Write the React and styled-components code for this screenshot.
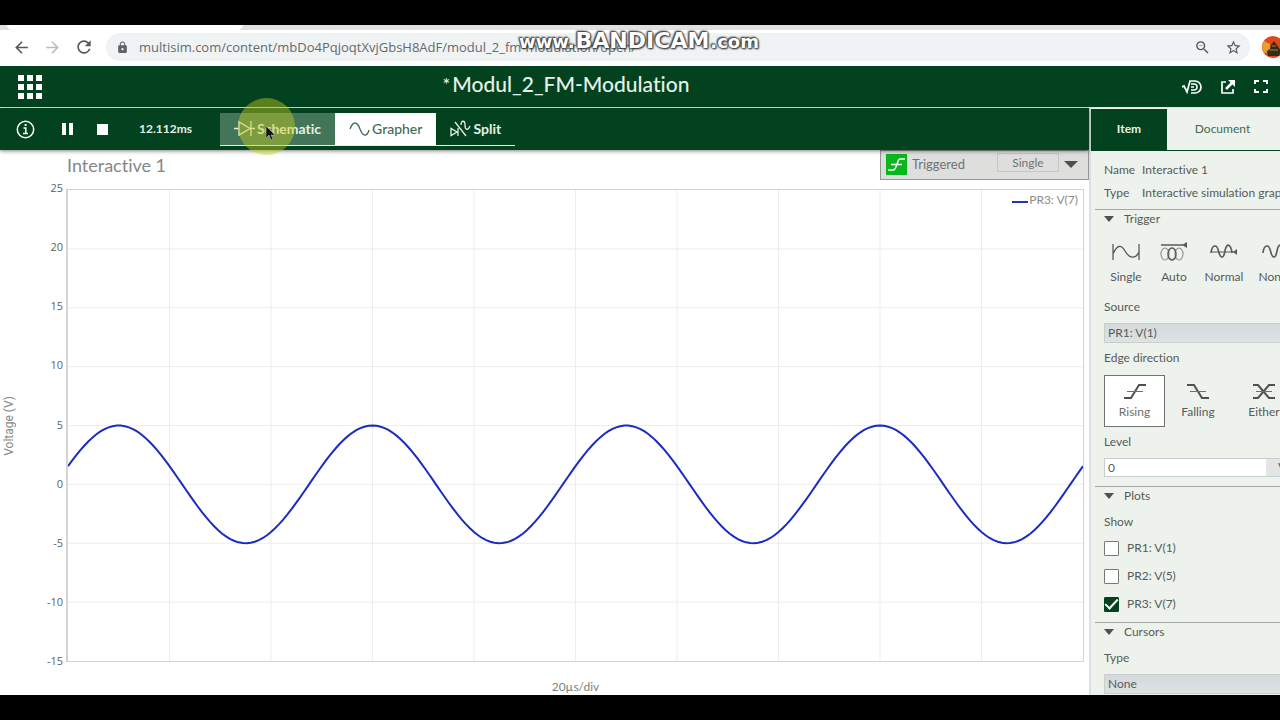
import React from 'react';
import styled, { createGlobalStyle, css } from 'styled-components';
import { MdArrowBack, MdArrowForward, MdRefresh, MdLock, MdZoomOut, MdStarBorder } from 'react-icons/md';

const green = '#03421f';
const panel = '#edf2ed';
const text = '#565b58';

const GlobalStyle = createGlobalStyle`
  * {
    box-sizing: border-box;
  }
  body {
    margin: 0;
    background: #000;
    font-family: Lato, 'Liberation Sans', sans-serif;
    font-size: 12px;
    line-height: 16px;
    font-variant-ligatures: none;
    color: ${text};
  }
  button, input, select {
    font: inherit;
    color: inherit;
    margin: 0;
  }
  button {
    padding: 0;
    border: 0;
    background: none;
  }
  svg {
    display: block;
    flex: none;
  }
`;

const Screen = styled.div`
  position: relative;
  display: flex;
  flex-direction: column;
  height: 100vh;
  padding: 25px 0;
  overflow: hidden;
`;

const TabStrip = styled.div`
  height: 5px;
  flex: none;
  background: #dee1e4;
`;

const ActiveTab = styled.div`
  height: 5px;
  width: 236px;
  margin-left: 7px;
  border-radius: 0 0 5px 5px;
  background: #fff;
`;

const BrowserBar = styled.div`
  display: flex;
  flex: none;
  align-items: center;
  height: 36px;
  padding: 0 0 2px 12px;
  gap: 12px;
  background: #fff;
  overflow: hidden;
`;

const NavButton = styled.button`
  color: ${({ $dim }) => ($dim ? '#b9bbbd' : '#55585c')};
`;

const Omnibox = styled.div`
  display: flex;
  flex: 1;
  min-width: 0;
  align-items: center;
  gap: 10px;
  height: 28px;
  padding: 0 8px 0 10px;
  border-radius: 14px;
  background: #f0f3f3;
  color: #5f6368;
`;

const OmniActions = styled.div`
  display: flex;
  gap: 14px;
`;

const Url = styled.input`
  flex: 1;
  min-width: 0;
  padding: 0;
  border: 0;
  background: none;
  font-family: 'Open Sans', 'Noto Sans', sans-serif;
  font-size: 13px;
  color: #66696c;
`;

const Avatar = styled.div`
  flex: none;
  width: 18px;
  height: 22px;
  overflow: hidden;
`;

const Header = styled.header`
  display: grid;
  grid-template-columns: 60px 1fr 208px;
  align-items: center;
  flex: none;
  height: 42px;
  border-bottom: 1px solid #dfe8e1;
  background: ${green};
  color: #fff;
`;

const AppsButton = styled.button`
  justify-self: center;
  color: #fff;
`;

const Title = styled.h1`
  display: flex;
  justify-content: center;
  gap: 2px;
  margin: 0 0 6px;
  font-size: 21px;
  line-height: 28px;
  font-weight: 500;
  color: #e6f2e8;
  small {
    font-size: 18px;
  }
`;

const HeaderActions = styled.div`
  display: flex;
  justify-content: flex-end;
  align-items: center;
  gap: 19px;
  padding-right: 12px;
  button {
    color: #fff;
  }
`;

const Body = styled.div`
  display: flex;
  flex: 1;
  min-height: 0;
  background: #fff;
`;

const Main = styled.main`
  display: flex;
  flex: 1;
  min-width: 0;
  flex-direction: column;
`;

const Toolbar = styled.div`
  position: relative;
  display: flex;
  flex: none;
  align-items: center;
  height: 42px;
  padding: 0 16px;
  background: ${green};
  box-shadow: 0 1px 4px rgba(0, 0, 0, 0.5);
  color: #fff;
`;

const ToolButton = styled.button`
  flex: none;
  width: ${({ $wide }) => ($wide ? 46 : 35)}px;
  color: #fff;
`;

const SimTime = styled.span`
  flex: none;
  width: 88px;
  padding-left: 7px;
  font-weight: 700;
  color: #e6f0e6;
`;

const ViewTabs = styled.div`
  display: flex;
  border-bottom: 1px solid #e6efe8;
`;

const ViewTab = styled.button`
  display: flex;
  align-items: center;
  gap: 2px;
  height: 32px;
  padding: 0 14px;
  font-size: 14px;
  font-weight: 700;
  color: #e6f0e6;
  ${({ $hovered }) => $hovered && css`
    background: #42755a;
  `}
  ${({ $active }) => $active && css`
    background: #fff;
    font-weight: 500;
    color: #3f6b53;
  `}
`;

const GraphHead = styled.div`
  display: flex;
  flex: none;
  justify-content: space-between;
  align-items: center;
  height: 30px;
  padding: 0 0 0 67px;
`;

const GraphTitle = styled.h2`
  margin: 0;
  font-size: 18px;
  line-height: 22px;
  font-weight: 400;
  color: #858786;
`;

const TriggerBar = styled.div`
  display: flex;
  align-items: center;
  width: 209px;
  height: 30px;
  padding: 0 10px 2px 5px;
  gap: 5px;
  border: 1px solid #959795;
  background: #dededc;
  font-size: 13px;
  color: #707371;
`;

const SingleButton = styled.button`
  align-self: flex-start;
  width: 62px;
  height: 19px;
  margin: 2px 0 0 auto;
  border: 1px solid #c6c8c6;
  font-size: 12px;
`;

const Graph = styled.div`
  display: grid;
  grid-template-columns: 18px 45px 1fr;
  grid-template-rows: 1fr 33px;
  flex: 1;
  min-height: 0;
  padding: 9px 5px 0 0;
`;

const YTitle = styled.div`
  align-self: center;
  justify-self: center;
  writing-mode: vertical-rl;
  transform: rotate(180deg);
  font-family: Roboto, sans-serif;
  font-size: 12px;
  color: #858786;
`;

const YAxis = styled.div`
  display: flex;
  flex-direction: column;
  justify-content: space-between;
  margin: -9px 0 -7px;
  text-align: right;
  font-family: 'Open Sans', sans-serif;
  font-size: 11px;
  color: #606361;
`;

const XTitle = styled.div`
  grid-column: 3;
  align-self: end;
  margin-left: 4px;
  text-align: center;
  color: #7c7f7d;
`;

const Plot = styled.div`
  position: relative;
  min-height: 0;
  margin-left: 3px;
  border: 2px solid #d3d5d4;
  border-width: 1px 1px 1px 2px;
  svg {
    width: 100%;
    height: 100%;
  }
`;

const Legend = styled.div`
  position: absolute;
  top: 2px;
  right: 5px;
  display: flex;
  align-items: center;
  gap: 1px;
  color: #8a8c8b;
  &::before {
    content: '';
    width: 16px;
    height: 2px;
    margin-top: 4px;
    background: #2336ae;
  }
`;

const Sidebar = styled.aside`
  flex: 0 0 191px;
  border-left: 2px solid #dbe1e2;
  background: ${panel};
  overflow: hidden;
`;

const SideTabs = styled.div`
  display: flex;
  height: 43px;
  padding-top: 1px;
  border-bottom: 1px solid ${green};
`;

const SideTab = styled.button`
  flex: 0 0 ${({ $active }) => ($active ? 76 : 111)}px;
  padding-bottom: 2px;
  color: #3f6b53;
  ${({ $active }) => $active && css`
    background: ${green};
    font-weight: 700;
    color: #e6f2e8;
  `}
`;

const Info = styled.dl`
  display: grid;
  grid-template-columns: 38px 160px;
  row-gap: 7px;
  margin: 0;
  padding: 11px 0 8px 13px;
  white-space: nowrap;
  dd {
    margin: 0;
  }
`;

const Section = styled.section`
  margin-left: 4px;
  padding: 0 0 ${({ $pad }) => $pad}px 9px;
  border-top: 1px solid #a3a9a5;
`;

const SectionTitle = styled.h3`
  display: flex;
  align-items: center;
  gap: 10px;
  height: 18px;
  margin: 0;
  font-size: 12px;
  font-weight: 400;
`;

const Modes = styled.div`
  display: flex;
  width: 210px;
  padding: 14px 0 5px;
`;

const Mode = styled.button`
  display: flex;
  flex: 0 0 ${({ $width }) => $width}px;
  flex-direction: column;
  align-items: center;
  gap: 7px;
`;

const Field = styled.label`
  display: block;
  width: 220px;
  margin: 9px 0 0;
`;

const ShowLabel = styled.div`
  margin: 9px 0 4px;
`;

const Select = styled.select`
  display: block;
  width: 100%;
  height: 20px;
  margin: 8px 0 7px;
  padding: 0 3px;
  border: 1px solid #c9cfcf;
  border-radius: 0;
  appearance: none;
  background: linear-gradient(#d4d9dc, #dde2e3);
`;

const Edges = styled.div`
  display: flex;
  width: 225px;
  margin: 9px 0 7px;
`;

const Edge = styled.button`
  display: flex;
  flex: 0 0 ${({ $active }) => ($active ? 61 : 66)}px;
  flex-direction: column;
  align-items: center;
  justify-content: center;
  gap: 4px;
  height: 52px;
  border: 1px solid transparent;
  ${({ $active }) => $active && css`
    border-color: #6f7471;
    background: #fff;
    color: #6c706d;
  `}
`;

const LevelRow = styled.div`
  display: flex;
  width: 220px;
  height: 19px;
  margin-top: 8px;
  border: 1px solid #c9cfcf;
  background: #e3e6e4;
  span {
    padding-left: 12px;
  }
`;

const LevelInput = styled.input`
  width: 161px;
  padding: 0 3px;
  border: 0;
  background: #fff;
`;

const Check = styled.label`
  display: flex;
  align-items: center;
  gap: 8px;
  height: 28px;
`;

const Box = styled.input`
  display: grid;
  place-items: center;
  width: 15px;
  height: 15px;
  border: 1px solid #747b77;
  border-radius: 1px;
  appearance: none;
  background: #fff;
  &:checked {
    border-color: ${green};
    background: ${green};
  }
  &:checked::after {
    content: '';
    width: 11px;
    height: 5px;
    border: solid #fff;
    border-width: 0 0 2px 2px;
    transform: translateY(-2px) rotate(-47deg);
  }
`;

const Watermark = styled.div`
  position: absolute;
  top: 27px;
  left: 519px;
  display: flex;
  align-items: baseline;
  gap: 1px;
  font-family: 'DejaVu Sans', sans-serif;
  font-weight: 700;
  font-size: 18px;
  line-height: 28px;
  color: #fff;
  text-shadow: 0 0 2px #333, 0 0 2px #333, 1px 1px 2px #333, -1px -1px 2px #333;
  b {
    font-size: 22px;
  }
`;

const Pointer = styled.div`
  position: absolute;
  top: 98px;
  left: 238px;
  width: 57px;
  height: 57px;
  border-radius: 50%;
  background: rgba(196, 205, 28, 0.45);
  pointer-events: none;
  svg {
    margin: 28px 0 0 28px;
  }
`;

const Icon = ({ w, h, children, sw = 1.3 }) => (
  <svg width={w} height={h} viewBox={`0 0 ${w} ${h}`} fill='none' stroke='currentColor' strokeWidth={sw} aria-hidden='true'>
    {children}
  </svg>
);

const Caret = ({ w = 10, h = 6 }) => (
  <svg width={w} height={h} viewBox='0 0 10 6' preserveAspectRatio='none' aria-hidden='true'>
    <path d='M0 0h10L5 6z' fill='#4c524e' />
  </svg>
);

const AppsIcon = () => (
  <Icon w={24} h={24} sw={0}>
    {[0, 9, 18].map(y => [0, 9, 18].map(x => <rect key={`${x}-${y}`} x={x} y={y} width='6' height='6' fill='#fff' />))}
  </Icon>
);

const edgePaths = {
  rising: 'M0 15h7L15 2h7',
  falling: 'M0 2h7l8 13h7',
  either: 'M0 2h5l11 13h6M0 15h5L16 2h6',
};

const EdgeIcon = ({ kind }) => (
  <Icon w={22} h={17} sw={2}>
    <path d={edgePaths[kind]} stroke='#4c524e' />
    <path d='M3 8.500h16' stroke='#6c716e' strokeWidth='1' />
  </Icon>
);

// one cycle lasts 2.5 divisions, the first crest is half a division in
const wave = () => {
  const points = [];
  for (let x = 0; x <= 1000; x += 4) {
    const v = 5 * Math.cos((2 * Math.PI * (x - 50)) / 250);
    points.push(`${x},${((25 - v) / 40) * 800}`);
  }
  return points.join(' ');
};

const ticks = [25, 20, 15, 10, 5, 0, -5, -10, -15];

const BrowserChrome = () => (
  <>
    <TabStrip><ActiveTab /></TabStrip>
    <BrowserBar>
      <NavButton aria-label='Back'><MdArrowBack size={19} /></NavButton>
      <NavButton $dim aria-label='Forward'><MdArrowForward size={19} /></NavButton>
      <NavButton aria-label='Reload'><MdRefresh size={20} /></NavButton>
      <Omnibox>
        <MdLock size={13} />
        <Url aria-label='Address' defaultValue='multisim.com/content/mbDo4PqjoqtXvjGbsH8AdF/modul_2_fm-modulation/open/' />
        <OmniActions>
          <NavButton aria-label='Zoom'><MdZoomOut size={17} /></NavButton>
          <NavButton aria-label='Bookmark'><MdStarBorder size={17} /></NavButton>
        </OmniActions>
      </Omnibox>
      <Avatar>
        <svg width='22' height='22' viewBox='0 0 22 22' aria-hidden='true'>
          <circle cx='11' cy='11' r='11' fill='#e0481a' />
          <path d='M2 5a11 11 0 0 0 0 12l6-1V8z' fill='#e8a02c' />
          <path d='M9 9l3-4 3 4 2 3 2 3-2 5H6l-1-5 3-2z' fill='#3a2a18' />
          <path d='M10 10h4M8 14h8' stroke='#a8823c' />
        </svg>
      </Avatar>
    </BrowserBar>
  </>
);

const AppHeader = () => (
  <Header>
    <AppsButton aria-label='Apps'><AppsIcon /></AppsButton>
    <Title><small>*</small>Modul_2_FM-Modulation</Title>
    <HeaderActions>
      <button aria-label='Simulation settings'>
        <Icon w={20} h={14} sw={1.7}>
          <path d='M0 7l2-1 3 6L8 1h5a6 6 0 0 1 0 12H9' />
          <path d='M9 4h3a3 3 0 0 1 0 6H9M9 7h3' strokeWidth='1.500' />
        </Icon>
      </button>
      <button aria-label='Open in new window'>
        <Icon w={14} h={14} sw={1.7}>
          <path d='M5 2H1v11h11V9' />
          <path d='M5 9l6-6' strokeWidth='2.500' />
          <path d='M7 0h7v7z' fill='#fff' stroke='none' />
        </Icon>
      </button>
      <button aria-label='Full screen'>
        <Icon w={14} h={13} sw={2}>
          <path d='M1 4V1h4M9 1h4v3M13 9v3H9M5 12H1V9' />
        </Icon>
      </button>
    </HeaderActions>
  </Header>
);

const SimToolbar = () => (
  <Toolbar>
    <ToolButton $wide aria-label='Info'>
      <Icon w={19} h={19} sw={1.5}>
        <circle cx='9.5' cy='9.5' r='8.2' />
        <path d='M7.5 8h2.3v5.5M7 13.5h5' />
        <path d='M8.6 4h2v2h-2z' fill='#fff' stroke='none' />
      </Icon>
    </ToolButton>
    <ToolButton aria-label='Pause'>
      <Icon w={11} h={12} sw={0}><path d='M0 0h4v12H0zM7 0h4v12H7z' fill='#fff' /></Icon>
    </ToolButton>
    <ToolButton aria-label='Stop'>
      <Icon w={11} h={11} sw={0}><path d='M0 0h11v11H0z' fill='#fff' /></Icon>
    </ToolButton>
    <SimTime>12.112ms</SimTime>
    <ViewTabs>
      <ViewTab $hovered>
        <Icon w={21} h={17}><path d='M0 8.5h5M5 2v13l11-6.500zM17 1v15M16 8.500h5' /></Icon>
        Schematic
      </ViewTab>
      <ViewTab $active>
        <Icon w={21} h={16}><path d='M1 8C4 0 8 0 11 8s7 8 9 1' /></Icon>
        Grapher
      </ViewTab>
      <ViewTab>
        <Icon w={21} h={17}>
          <path d='M1 8.500v7l6-3.500zM8 8v8M5 2l11 14M11 5c0-5 4-5 4 0s3 6 5 1' />
        </Icon>
        Split
      </ViewTab>
    </ViewTabs>
  </Toolbar>
);

const Grapher = () => (
  <>
    <GraphHead>
      <GraphTitle>Interactive 1</GraphTitle>
      <TriggerBar>
        <svg width='21' height='21' viewBox='0 0 21 21' aria-hidden='true'>
          <path d='M0 0h21v21H0z' fill='#09b61b' />
          <path d='M2 16h5c4 0 4-11 7-11h5M5 10.500h11' fill='none' stroke='#fff' strokeWidth='1.500' />
        </svg>
        Triggered
        <SingleButton>Single</SingleButton>
        <button aria-label='Trigger options'><Caret w={14} h={7} /></button>
      </TriggerBar>
    </GraphHead>
    <Graph>
      <YTitle>Voltage (V)</YTitle>
      <YAxis>
        {ticks.map(tick => <span key={tick}>{tick}</span>)}
      </YAxis>
      <Plot>
        <svg viewBox='0 0 1000 800' preserveAspectRatio='none' role='img' aria-label='PR3: V(7)'>
          <g stroke='#ededed'>
            {[1, 2, 3, 4, 5, 6, 7, 8, 9].map(i => (
              <path key={i} d={`M${i * 100} 0v800`} vectorEffect='non-scaling-stroke' />
            ))}
            {[1, 2, 3, 4, 5, 6, 7].map(i => (
              <path key={i} d={`M0 ${i * 100}h1000`} vectorEffect='non-scaling-stroke' />
            ))}
          </g>
          <polyline points={wave()} fill='none' stroke='#1c2cc0' strokeWidth='2' vectorEffect='non-scaling-stroke' />
        </svg>
        <Legend>PR3: V(7)</Legend>
      </Plot>
      <XTitle>20µs/div</XTitle>
    </Graph>
  </>
);

const Inspector = () => (
  <Sidebar>
    <SideTabs>
      <SideTab $active>Item</SideTab>
      <SideTab>Document</SideTab>
    </SideTabs>
    <Info>
      <dt>Name</dt><dd>Interactive 1</dd>
      <dt>Type</dt><dd>Interactive simulation grapher</dd>
    </Info>
    <Section $pad={9}>
      <SectionTitle><Caret />Trigger</SectionTitle>
      <Modes>
        <Mode $width={44}>
          <Icon w={28} h={20}><path d='M1 2v16M27 2v16M1 12C5 3 9 2 13 9s10 9 14 1' /></Icon>
          Single
        </Mode>
        <Mode $width={52}>
          <Icon w={28} h={20} sw={1.1}>
            <path d='M1 3h22' strokeWidth='1.500' />
            <path d='M22 3l5-3v6z' fill='currentColor' stroke='none' />
            <ellipse cx='5' cy='12' rx='4' ry='6' stroke='#8c918e' />
            <ellipse cx='19' cy='12' rx='4' ry='6' stroke='#8c918e' />
            <ellipse cx='12' cy='12' rx='4' ry='6' strokeWidth='1.500' />
          </Icon>
          Auto
        </Mode>
        <Mode $width={48}>
          <Icon w={28} h={20}>
            <path d='M1 10h23' strokeWidth='1' />
            <path d='M1 11C2 2 7 2 8.500 9s5 9 6.500 0 6-7 7 2' strokeWidth='1.600' />
            <path d='M23 10l4-3v6z' fill='currentColor' stroke='none' />
          </Icon>
          Normal
        </Mode>
        <Mode $width={50}>
          <Icon w={28} h={20} sw={1.6}><path d='M4 11C5 2 10 2 11.500 9s5 9 6.500 0 6-7 7 2' /></Icon>
          None
        </Mode>
      </Modes>
      <Field>
        Source
        <Select><option>PR1: V(1)</option></Select>
      </Field>
      Edge direction
      <Edges>
        <Edge $active><EdgeIcon kind='rising' />Rising</Edge>
        <Edge><EdgeIcon kind='falling' />Falling</Edge>
        <Edge><EdgeIcon kind='either' />Either</Edge>
      </Edges>
      <label htmlFor='level'>Level</label>
      <LevelRow>
        <LevelInput id='level' defaultValue='0' />
        <span>V</span>
      </LevelRow>
    </Section>
    <Section $pad={4}>
      <SectionTitle><Caret />Plots</SectionTitle>
      <ShowLabel>Show</ShowLabel>
      <Check><Box type='checkbox' />PR1: V(1)</Check>
      <Check><Box type='checkbox' />PR2: V(5)</Check>
      <Check><Box type='checkbox' defaultChecked />PR3: V(7)</Check>
    </Section>
    <Section $pad={0}>
      <SectionTitle><Caret />Cursors</SectionTitle>
      <Field>
        Type
        <Select><option>None</option></Select>
      </Field>
    </Section>
  </Sidebar>
);

const App = () => (
  <Screen>
    <GlobalStyle />
    <BrowserChrome />
    <AppHeader />
    <Body>
      <Main>
        <SimToolbar />
        <Grapher />
      </Main>
      <Inspector />
    </Body>
    <Watermark>www.<b>BANDICAM</b>.com</Watermark>
    <Pointer>
      <svg width='10' height='15' viewBox='0 0 10 15' aria-hidden='true'>
        <path d='M0 0v12l3-3 2 5 2-1-2-4h4z' fill='#111' stroke='#ccc' strokeWidth='.5' />
      </svg>
    </Pointer>
  </Screen>
);

export default App;
